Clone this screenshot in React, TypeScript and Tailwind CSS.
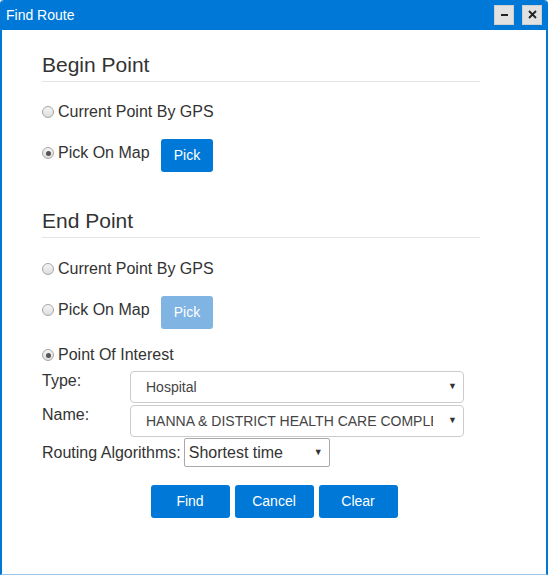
import React from 'react';

const Radio: React.FC<{ checked?: boolean; label: string }> = ({ checked, label }) => (
  <label className="flex items-center h-[24px] text-[16px] leading-[24px] text-[#333]">
    <span className="relative w-[12px] h-[12px] rounded-full border border-[#a6a6a6] bg-gradient-to-b from-[#f4f4f4] to-[#dedede] flex items-center justify-center mr-[4px]">
      {checked && <span className="w-[5px] h-[5px] rounded-full bg-[#555]"></span>}
    </span>
    {label}
  </label>
);

const PickButton: React.FC<{ disabled?: boolean }> = ({ disabled }) => (
  <button
    className={
      disabled
        ? 'w-[52px] h-[33px] rounded-[3px] bg-[#7fb4e3] text-white text-[14px] cursor-not-allowed'
        : 'w-[52px] h-[33px] rounded-[3px] bg-[#0078d7] text-white text-[14px]'
    }
  >
    Pick
  </button>
);

const Heading: React.FC<{ title: string }> = ({ title }) => (
  <div className="h-[29px] border-b border-[#e5e5e5] text-[21px] leading-[24px] text-[#333]">{title}</div>
);

const Arrow = () => <span className="text-[9px] text-[#333]">▼</span>;

export default function App() {
  return (
    <div className="w-[548px] h-[575px] bg-white" style={{ fontFamily: '"Liberation Sans", Arial, sans-serif' }}>
      <div className="w-full h-full flex flex-col rounded-t-[4px] overflow-hidden border-x-2 border-b border-x-[#0078d7] border-b-[#9cc3e8]">
        {/* title bar */}
        <div className="h-[30px] shrink-0 bg-[#0078d7] flex items-center justify-between pl-[4px] pr-[4px]">
          <span className="text-white text-[14px]">Find Route</span>
          <div className="flex gap-[8px] pb-[1px]">
            <button className="w-[20px] h-[20px] bg-[#e1e1e1] border border-[#cfcfcf] flex items-center justify-center">
              <span className="w-[7px] h-[2px] bg-[#222]"></span>
            </button>
            <button className="w-[20px] h-[20px] bg-[#e1e1e1] border border-[#cfcfcf] flex items-center justify-center">
              <svg width="9" height="9" viewBox="0 0 9 9">
                <path d="M1 1 L8 8 M8 1 L1 8" stroke="#222" strokeWidth="1.8" />
              </svg>
            </button>
          </div>
        </div>

        {/* body */}
        <div className="flex-1 bg-white flex flex-col">
          <div className="pl-[40px] w-[478px] flex flex-col">
            <div className="mt-[23px]">
              <Heading title="Begin Point" />
            </div>
            <div className="mt-[18px]">
              <Radio label="Current Point By GPS" />
            </div>
            <div className="mt-[15px] flex items-start">
              <div className="mt-[2px] w-[119px]">
                <Radio checked label="Pick On Map" />
              </div>
              <PickButton />
            </div>

            <div className="mt-[37px]">
              <Heading title="End Point" />
            </div>
            <div className="mt-[19px]">
              <Radio label="Current Point By GPS" />
            </div>
            <div className="mt-[15px] flex items-start">
              <div className="mt-[2px] w-[119px]">
                <Radio label="Pick On Map" />
              </div>
              <PickButton disabled />
            </div>
            <div className="mt-[14px]">
              <Radio checked label="Point Of Interest" />
            </div>
          </div>

          <div className="pl-[40px] flex flex-col text-[16px] text-[#333]">
            <div className="mt-[4px] flex items-start">
              <span className="w-[88px] leading-[20px]">Type:</span>
              <div className="w-[334px] h-[32px] border border-[#cccccc] rounded-[4px] flex items-center justify-between pl-[15px] pr-[6px] text-[14px] text-[#444]">
                <span>Hospital</span>
                <Arrow />
              </div>
            </div>
            <div className="mt-[2px] flex items-start">
              <span className="w-[88px] leading-[20px]">Name:</span>
              <div className="w-[334px] h-[32px] border border-[#cccccc] rounded-[4px] flex items-center justify-between pl-[15px] pr-[6px] text-[14px] text-[#444]">
                <span className="w-[287px] overflow-hidden whitespace-nowrap">HANNA &amp; DISTRICT HEALTH CARE COMPLEX</span>
                <Arrow />
              </div>
            </div>
            <div className="mt-[1px] flex items-center">
              <span className="mr-[3px]">Routing Algorithms:</span>
              <div className="w-[146px] h-[29px] border border-[#a9a9a9] rounded-[2px] flex items-center justify-between pl-[4px] pr-[6px]">
                <span>Shortest time</span>
                <Arrow />
              </div>
            </div>
          </div>

          <div className="mt-[18px] flex justify-center gap-[5px]">
            <button className="w-[79px] h-[33px] rounded-[3px] bg-[#0078d7] text-white text-[14px]">Find</button>
            <button className="w-[79px] h-[33px] rounded-[3px] bg-[#0078d7] text-white text-[14px]">Cancel</button>
            <button className="w-[79px] h-[33px] rounded-[3px] bg-[#0078d7] text-white text-[14px]">Clear</button>
          </div>
        </div>
      </div>
    </div>
  );
}
